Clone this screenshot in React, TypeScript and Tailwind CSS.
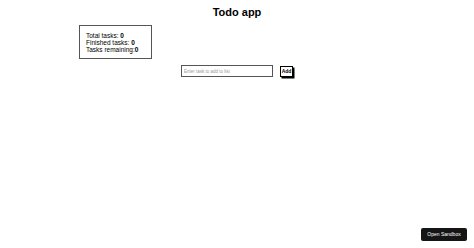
export default function App() {
  return (
    <div className="relative h-[248px] w-full bg-white font-['Liberation_Sans',Arial,sans-serif] text-black">
      <h1 className="pt-[6px] text-center text-[11px] leading-[13px] font-bold">Todo app</h1>
      <div className="ml-[79px] mt-[6px] w-[73px] border border-[#555] px-[6px] pt-[6px] pb-[5px] text-[6.5px] leading-[7px]">
        <div>Total tasks: <b>0</b></div>
        <div>Finished tasks: <b>0</b></div>
        <div>Tasks remaining:<b>0</b></div>
      </div>
      <div className="mt-[6px] flex items-center justify-center gap-[7px]">
        <input
          className="h-[12px] w-[92px] border border-[#555] px-[2px] text-[4.5px] outline-none placeholder:text-[#999]"
          placeholder="Enter task to add to list"
        />
        <button className="h-[11px] w-[13px] border border-black bg-white text-[5px] font-bold leading-none shadow-[1.5px_1.5px_0_#000]">
          Add
        </button>
      </div>
      <button className="absolute right-[7px] bottom-[7px] h-[13px] w-[46px] rounded-[2px] bg-[#151515] text-[5px] text-white">
        Open Sandbox
      </button>
    </div>
  )
}
